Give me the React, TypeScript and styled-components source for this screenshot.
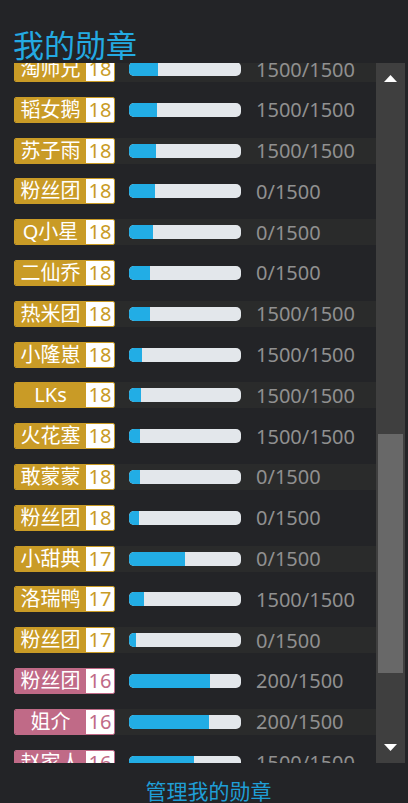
import React, { useLayoutEffect, useRef } from "react";
import styled, { createGlobalStyle } from "styled-components";

type Tone = "gold" | "pink";

interface Medal {
  name: string;
  level: number;
  tone: Tone;
  fill: number;
  count: string;
}

const medals: Medal[] = [
  { name: "淘师兄", level: 18, tone: "gold", fill: 29, count: "1500/1500" },
  { name: "韬女鹅", level: 18, tone: "gold", fill: 28, count: "1500/1500" },
  { name: "苏子雨", level: 18, tone: "gold", fill: 27, count: "1500/1500" },
  { name: "粉丝团", level: 18, tone: "gold", fill: 26, count: "0/1500" },
  { name: "Q小星", level: 18, tone: "gold", fill: 24, count: "0/1500" },
  { name: "二仙乔", level: 18, tone: "gold", fill: 21, count: "0/1500" },
  { name: "热米团", level: 18, tone: "gold", fill: 21, count: "1500/1500" },
  { name: "小隆崽", level: 18, tone: "gold", fill: 13, count: "1500/1500" },
  { name: "LKs", level: 18, tone: "gold", fill: 12, count: "1500/1500" },
  { name: "火花塞", level: 18, tone: "gold", fill: 11, count: "1500/1500" },
  { name: "敢蒙蒙", level: 18, tone: "gold", fill: 11, count: "0/1500" },
  { name: "粉丝团", level: 18, tone: "gold", fill: 10, count: "0/1500" },
  { name: "小甜典", level: 17, tone: "gold", fill: 56, count: "0/1500" },
  { name: "洛瑞鸭", level: 17, tone: "gold", fill: 15, count: "1500/1500" },
  { name: "粉丝团", level: 17, tone: "gold", fill: 7, count: "0/1500" },
  { name: "粉丝团", level: 16, tone: "pink", fill: 81, count: "200/1500" },
  { name: "姐介", level: 16, tone: "pink", fill: 80, count: "200/1500" },
  { name: "赵家人", level: 16, tone: "pink", fill: 65, count: "1500/1500" },
];

const toneColor: Record<Tone, string> = {
  gold: "#c99b26",
  pink: "#c06a87",
};

const BAR_WIDTH = 112;

export default function App() {
  const viewportRef = useRef<HTMLDivElement>(null);

  // the list is shown scrolled a few pixels down, as in the capture
  useLayoutEffect(() => {
    if (viewportRef.current) viewportRef.current.scrollTop = 7;
  }, []);

  return (
    <>
      <GlobalStyle />
      <Page>
        <Title>我的勋章</Title>
        <Panel>
          <Viewport ref={viewportRef}>
            {medals.map((m, i) => (
              <Row key={i} $striped={i % 2 === 0}>
                <Badge $color={toneColor[m.tone]}>
                  <BadgeName $color={toneColor[m.tone]}>{m.name}</BadgeName>
                  <BadgeLevel $color={toneColor[m.tone]}>{m.level}</BadgeLevel>
                </Badge>
                <Bar>
                  <BarFill style={{ width: `${(m.fill / BAR_WIDTH) * 100}%` }} />
                </Bar>
                <Count>{m.count}</Count>
              </Row>
            ))}
          </Viewport>
          <Scrollbar>
            <ScrollButton>
              <svg width="13" height="7" viewBox="0 0 13 7">
                <polygon points="6.5,0 13,7 0,7" fill="#fff" />
              </svg>
            </ScrollButton>
            <Track>
              <Thumb />
            </Track>
            <ScrollButton>
              <svg width="13" height="7" viewBox="0 0 13 7">
                <polygon points="0,0 13,0 6.5,7" fill="#fff" />
              </svg>
            </ScrollButton>
          </Scrollbar>
        </Panel>
        <Footer>
          <ManageLink>管理我的勋章</ManageLink>
        </Footer>
      </Page>
    </>
  );
}

const GlobalStyle = createGlobalStyle`
  html, body {
    margin: 0;
    padding: 0;
    background: #232427;
  }
  body {
    font-family: "Noto Sans", "Noto Sans CJK SC", sans-serif;
  }
`;

const Page = styled.div`
  width: 408px;
  height: 803px;
  overflow: hidden;
  display: flex;
  flex-direction: column;
  background: #232427;
`;

const Title = styled.h1`
  margin: 0;
  padding: 28px 0 0 13px;
  height: 35px;
  font-size: 31px;
  line-height: 31px;
  font-weight: 400;
  color: #24aae2;
  font-family: "Noto Sans CJK SC", sans-serif;
`;

const Panel = styled.div`
  display: flex;
  height: 700px;
  padding-right: 3px;
`;

const Viewport = styled.div`
  flex: 1;
  overflow: hidden;
  padding-left: 14px;
`;

const Row = styled.div<{ $striped: boolean }>`
  display: flex;
  align-items: center;
  height: 26px;
  margin-bottom: 14.8px;
  background: ${(p) => (p.$striped ? "#2a2b2b" : "transparent")};
`;

const Badge = styled.div<{ $color: string }>`
  display: flex;
  width: 101px;
  height: 26px;
  box-sizing: border-box;
  border: 1px solid ${(p) => p.$color};
  border-radius: 2px;
  overflow: hidden;
  flex-shrink: 0;
`;

const BadgeName = styled.span<{ $color: string }>`
  width: 71px;
  background: ${(p) => p.$color};
  color: #fff;
  font-size: 20px;
  line-height: 24px;
  text-align: center;
  white-space: nowrap;
`;

const BadgeLevel = styled.span<{ $color: string }>`
  flex: 1;
  background: #fff;
  color: ${(p) => p.$color};
  font-size: 20px;
  line-height: 24px;
  text-align: center;
`;

const Bar = styled.div`
  width: ${BAR_WIDTH}px;
  height: 14px;
  margin-left: 14px;
  border-radius: 5px;
  background: #e3e7eb;
  overflow: hidden;
  flex-shrink: 0;
`;

const BarFill = styled.div`
  height: 100%;
  background: #22ade5;
`;

const Count = styled.span`
  margin-left: 15px;
  font-size: 20px;
  color: #909090;
  white-space: nowrap;
`;

const Scrollbar = styled.div`
  width: 29px;
  display: flex;
  flex-direction: column;
  background: #3f3f3f;
`;

const ScrollButton = styled.div`
  height: 31px;
  display: flex;
  align-items: center;
  justify-content: center;
  flex-shrink: 0;
`;

const Track = styled.div`
  flex: 1;
  padding: 0 2px;
`;

const Thumb = styled.div`
  margin-top: 340px;
  height: 239px;
  background: #686868;
`;

const Footer = styled.div`
  flex: 1;
  display: flex;
  justify-content: center;
  padding: 17px 0 0 9px;
`;

const ManageLink = styled.a`
  font-size: 21px;
  line-height: 21px;
  color: #1f9ed6;
  font-family: "Noto Sans CJK SC", sans-serif;
  cursor: pointer;
`;
